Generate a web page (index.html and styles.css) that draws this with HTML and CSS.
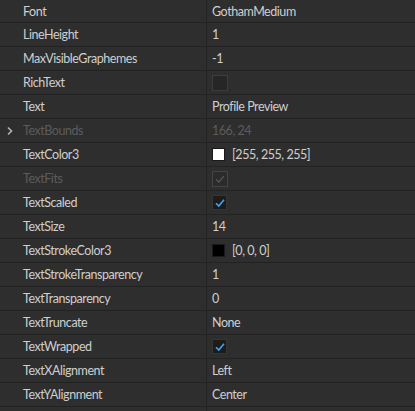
FILE: index.html
```html
<!DOCTYPE html>
<html>
<head>
<meta charset="utf-8">
<link rel="stylesheet" href="styles.css">
</head>
<body>
<div class="props">
  <div class="row row-first"><div class="name">Font</div><div class="val">GothamMedium</div></div>
  <div class="row"><div class="name">LineHeight</div><div class="val">1</div></div>
  <div class="row"><div class="name">MaxVisibleGraphemes</div><div class="val">-1</div></div>
  <div class="row"><div class="name">RichText</div><div class="val"><span class="cb"></span></div></div>
  <div class="row"><div class="name">Text</div><div class="val">Profile Preview</div></div>
  <div class="row disabled"><div class="name"><svg class="chev" width="8" height="10" viewBox="0 0 8 10"><path d="M2 1.5 L5.5 5 L2 8.5" fill="none" stroke="#b4b4b4" stroke-width="1.6"/></svg>TextBounds</div><div class="val">166, 24</div></div>
  <div class="row"><div class="name">TextColor3</div><div class="val"><span class="sw sw-white"></span>[255, 255, 255]</div></div>
  <div class="row disabled"><div class="name">TextFits</div><div class="val"><span class="cb cb-dis"><svg width="12" height="12" viewBox="0 0 12 12"><path d="M2 6.2 L4.8 9 L10 2.8" fill="none" stroke="#555" stroke-width="1.3"/></svg></span></div></div>
  <div class="row"><div class="name">TextScaled</div><div class="val"><span class="cb cb-on"><svg width="12" height="12" viewBox="0 0 12 12"><path d="M2 6.2 L4.8 9 L10 2.8" fill="none" stroke="#3fa7e8" stroke-width="1.6"/></svg></span></div></div>
  <div class="row"><div class="name">TextSize</div><div class="val">14</div></div>
  <div class="row"><div class="name">TextStrokeColor3</div><div class="val"><span class="sw sw-black"></span>[0, 0, 0]</div></div>
  <div class="row"><div class="name">TextStrokeTransparency</div><div class="val">1</div></div>
  <div class="row"><div class="name">TextTransparency</div><div class="val">0</div></div>
  <div class="row"><div class="name">TextTruncate</div><div class="val">None</div></div>
  <div class="row"><div class="name">TextWrapped</div><div class="val"><span class="cb cb-on"><svg width="12" height="12" viewBox="0 0 12 12"><path d="M2 6.2 L4.8 9 L10 2.8" fill="none" stroke="#3fa7e8" stroke-width="1.6"/></svg></span></div></div>
  <div class="row"><div class="name">TextXAlignment</div><div class="val">Left</div></div>
  <div class="row"><div class="name">TextYAlignment</div><div class="val">Center</div></div>
  <div class="row"><div class="name"></div><div class="val"></div></div>
</div>
</body>
</html>
```
FILE: styles.css
```css
html, body {
  margin: 0;
  padding: 0;
  background: #2e2e2e;
  overflow: hidden;
}
.props {
  width: 415px;
  height: 411px;
  overflow: hidden;
  font-family: Lato, "Noto Sans", sans-serif;
  font-size: 12.5px;
  letter-spacing: -0.45px;
  color: #cfcfcf;
}
.row {
  display: grid;
  grid-template-columns: 207px 1fr;
  height: 23px;
  border-bottom: 1px solid #222222;
  background: #2e2e2e;
}
.row-first {
  height: 22px;
}
.name {
  display: flex;
  align-items: center;
  padding-left: 23px;
  position: relative;
  border-right: 1px solid #222222;
  white-space: nowrap;
}
.val {
  display: flex;
  align-items: center;
  padding-left: 5px;
  white-space: nowrap;
}
.disabled .name, .disabled .val {
  color: #5c5c5c;
}
.chev {
  position: absolute;
  left: 6px;
  top: 7px;
}
.cb {
  width: 14px;
  height: 14px;
  border: 1px solid #3c3c3c;
  background: #262626;
  display: flex;
  align-items: center;
  justify-content: center;
}
.cb-dis {
  border-color: #444444;
  background: #2b2b2b;
}
.cb-on {
  width: 13px;
  height: 13px;
  background: #1c1c1c;
  border-color: #353535;
}
.sw {
  width: 11px;
  height: 11px;
  margin-right: 7px;
  border: 1px solid #1a1a1a;
}
.sw-white { background: #ffffff; }
.sw-black { background: #000000; }
```
